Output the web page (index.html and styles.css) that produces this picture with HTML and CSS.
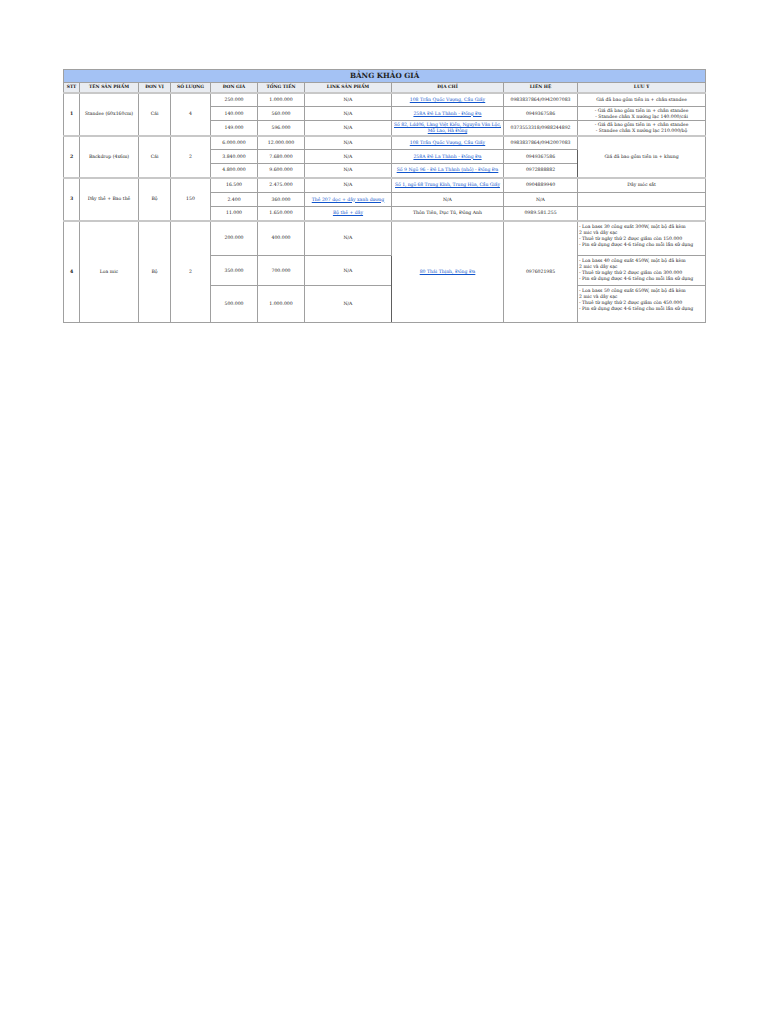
FILE: index.html
```html
<!DOCTYPE html>
<html lang="vi">
<head>
<meta charset="utf-8">
<title>Bảng khảo giá</title>
<link rel="stylesheet" href="styles.css">
</head>
<body>
<div class="page">
<table class="sheet">
  <colgroup>
    <col class="c-stt"><col class="c-name"><col class="c-unit"><col class="c-qty"><col class="c-price"><col class="c-total"><col class="c-link"><col class="c-addr"><col class="c-contact"><col class="c-note">
  </colgroup>
  <tr class="r-title"><td colspan="10" class="title">BẢNG KHẢO GIÁ</td></tr>
  <tr class="r-head">
    <th>STT</th><th class="bl">TÊN SẢN PHẨM</th><th class="bl">ĐƠN VỊ</th><th>SỐ LƯỢNG</th><th class="bl">ĐƠN GIÁ</th><th>TỔNG TIỀN</th><th>LINK SẢN PHẨM</th><th class="bl">ĐỊA CHỈ</th><th>LIÊN HỆ</th><th class="bl">LƯU Ý</th>
  </tr>

  <tr class="r14 gtop">
    <td rowspan="3" class="stt">1</td><td rowspan="3" class="bl">Standee (60x160cm)</td><td rowspan="3" class="bl">Cái</td><td rowspan="3">4</td>
    <td class="bl">250.000</td><td>1.000.000</td><td>N/A</td><td class="bl"><a>108 Trần Quốc Vượng, Cầu Giấy</a></td><td>0983837864/0942007083</td><td class="bl">Giá đã bao gồm tiền in + chân standee</td>
  </tr>
  <tr class="r14">
    <td class="bl">140.000</td><td>560.000</td><td>N/A</td><td class="bl"><a>258A Đê La Thành - Đống Đa</a></td><td>0949367586</td><td class="bl">- Giá đã bao gồm tiền in + chân standee<br>- Standee chân X nướng lạc 140.000/cái</td>
  </tr>
  <tr class="r15">
    <td class="bl">149.000</td><td>596.000</td><td>N/A</td><td class="bl tight"><a>Số 82, Ldd06, Làng Việt Kiều, Nguyễn Văn Lộc,<br>Mỗ Lao, Hà Đông</a></td><td>0373553318/0988244892</td><td class="bl">- Giá đã bao gồm tiền in + chân standee<br>- Standee chân X nướng lạc 210.000/bộ</td>
  </tr>

  <tr class="r14 gtop">
    <td rowspan="3" class="stt">2</td><td rowspan="3" class="bl">Backdrop (4x6m)</td><td rowspan="3" class="bl">Cái</td><td rowspan="3">2</td>
    <td class="bl">6.000.000</td><td>12.000.000</td><td>N/A</td><td class="bl"><a>108 Trần Quốc Vượng, Cầu Giấy</a></td><td>0983837864/0942007083</td><td rowspan="3" class="bl">Giá đã bao gồm tiền in + khung</td>
  </tr>
  <tr class="r14">
    <td class="bl">3.840.000</td><td>7.680.000</td><td>N/A</td><td class="bl"><a>258A Đê La Thành - Đống Đa</a></td><td>0949367586</td>
  </tr>
  <tr class="r14">
    <td class="bl">4.800.000</td><td>9.600.000</td><td>N/A</td><td class="bl"><a>Số 9 Ngõ 96 - Đê La Thành (nhỏ) - Đống Đa</a></td><td>0972888882</td>
  </tr>

  <tr class="r15 gtop">
    <td rowspan="3" class="stt">3</td><td rowspan="3" class="bl">Dây thẻ + Bao thẻ</td><td rowspan="3" class="bl">Bộ</td><td rowspan="3">150</td>
    <td class="bl">16.500</td><td>2.475.000</td><td>N/A</td><td class="bl tight"><a>Số 1, ngõ 68 Trung Kính, Trung Hòa, Cầu Giấy</a></td><td>0904889940</td><td class="bl">Dây móc sắt</td>
  </tr>
  <tr class="r14">
    <td class="bl">2.400</td><td>360.000</td><td><a>Thẻ 207 dọc + dây xanh dương</a></td><td class="bl">N/A</td><td>N/A</td><td class="bl"></td>
  </tr>
  <tr class="r14">
    <td class="bl">11.000</td><td>1.650.000</td><td><a>Bộ thẻ + dây</a></td><td class="bl">Thôn Tiên, Dục Tú, Đông Anh</td><td>0989.581.255</td><td class="bl"></td>
  </tr>

  <tr class="r35 gtop">
    <td rowspan="3" class="stt">4</td><td rowspan="3" class="bl">Loa mic</td><td rowspan="3" class="bl">Bộ</td><td rowspan="3">2</td>
    <td class="bl">200.000</td><td>400.000</td><td>N/A</td><td rowspan="3" class="bl"><a>80 Thái Thịnh, Đống Đa</a></td><td rowspan="3">0976021985</td>
    <td class="bl note">- Loa bass 30 công suất 300W, một bộ đã kèm<br>2 mic và dây sạc<br>- Thuê từ ngày thứ 2 được giảm còn 150.000<br>- Pin sử dụng được 4-6 tiếng cho mỗi lần sử dụng</td>
  </tr>
  <tr class="r30">
    <td class="bl">350.000</td><td>700.000</td><td>N/A</td>
    <td class="bl note">- Loa bass 40 công suất 450W, một bộ đã kèm<br>2 mic và dây sạc<br>- Thuê từ ngày thứ 2 được giảm còn 300.000<br>- Pin sử dụng được 4-6 tiếng cho mỗi lần sử dụng</td>
  </tr>
  <tr class="r37">
    <td class="bl">500.000</td><td>1.000.000</td><td>N/A</td>
    <td class="bl note">- Loa bass 50 công suất 650W, một bộ đã kèm<br>2 mic và dây sạc<br>- Thuê từ ngày thứ 2 được giảm còn 450.000<br>- Pin sử dụng được 4-6 tiếng cho mỗi lần sử dụng</td>
  </tr>
</table>
</div>
</body>
</html>
```

FILE: styles.css
```css
html, body {
  margin: 0;
  padding: 0;
  background: #ffffff;
}

.page {
  padding: 69px 0 0 63px;
}

.sheet {
  border-collapse: collapse;
  table-layout: fixed;
  width: 642px;
  font-family: "DejaVu Serif", "Liberation Serif", serif;
  font-size: 4.6px;
  line-height: 6px;
  color: #1a1a1a;
  border: 1px solid #6b6b6b;
}

.c-stt { width: 16px; }
.c-name { width: 59px; }
.c-unit { width: 32px; }
.c-qty { width: 40px; }
.c-price { width: 47px; }
.c-total { width: 47px; }
.c-link { width: 87px; }
.c-addr { width: 112px; }
.c-contact { width: 74px; }
.c-note { width: 128px; }

.sheet td,
.sheet th {
  border: 1px solid #a0a0a0;
  padding: 0 1px;
  text-align: center;
  vertical-align: middle;
  overflow: hidden;
  white-space: nowrap;
}

.sheet .bl {
  border-left: 1px solid #5e5e5e;
}

.sheet td.tight {
  padding: 0;
  letter-spacing: -0.1px;
}

.r-title { height: 13px; }
.title {
  background: #a4c2f4;
  font-weight: bold;
  font-size: 7.2px;
  line-height: 10px;
  color: #1f1f1f;
  border-bottom: 1px solid #6b6b6b;
}

.r-head { height: 10px; }
.r-head th {
  background: #e9ecf1;
  font-weight: bold;
  font-size: 4.4px;
  color: #1a1a1a;
  border-bottom: 1px solid #6b6b6b;
}

.r14 { height: 14px; }
.r15 { height: 15px; }
.r35 { height: 35px; }
.r30 { height: 30px; }
.r37 { height: 37px; }

.sheet .gtop td {
  border-top: 2px solid #c8c8c8;
}

.sheet td.stt {
  font-weight: bold;
}

.sheet td.note {
  text-align: left;
  vertical-align: top;
  padding: 2px 1px 0 1px;
}

.sheet a {
  color: #1155cc;
  text-decoration: underline;
}
```
